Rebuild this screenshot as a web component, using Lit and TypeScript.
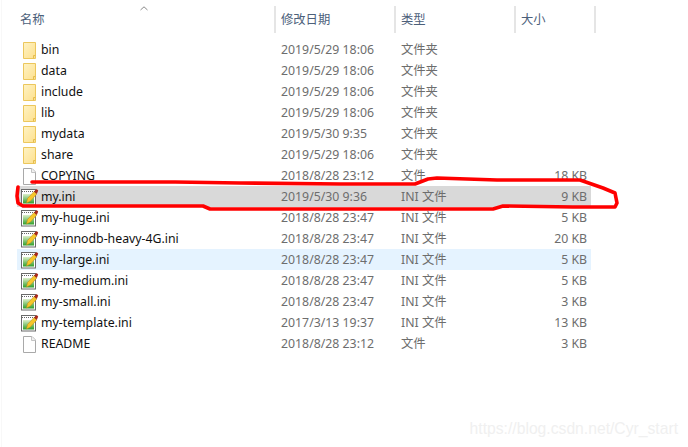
import { LitElement, html, css, svg } from "lit";
import { customElement } from "lit/decorators.js";

type Kind = "folder" | "file" | "ini";
interface Row { name: string; date: string; type: string; size: string; kind: Kind; cls?: string }

const D1 = "2019/5/29 18:06";
const F = "文件夹";
const I = "INI 文件";
const rows: Row[] = [
  { name: "bin", date: D1, type: F, size: "", kind: "folder" },
  { name: "data", date: D1, type: F, size: "", kind: "folder" },
  { name: "include", date: D1, type: F, size: "", kind: "folder" },
  { name: "lib", date: D1, type: F, size: "", kind: "folder" },
  { name: "mydata", date: "2019/5/30 9:35", type: F, size: "", kind: "folder" },
  { name: "share", date: D1, type: F, size: "", kind: "folder" },
  { name: "COPYING", date: "2018/8/28 23:12", type: "文件", size: "18 KB", kind: "file" },
  { name: "my.ini", date: "2019/5/30 9:36", type: I, size: "9 KB", kind: "ini", cls: "sel" },
  { name: "my-huge.ini", date: "2018/8/28 23:47", type: I, size: "5 KB", kind: "ini" },
  { name: "my-innodb-heavy-4G.ini", date: "2018/8/28 23:47", type: I, size: "20 KB", kind: "ini" },
  { name: "my-large.ini", date: "2018/8/28 23:47", type: I, size: "5 KB", kind: "ini", cls: "hover" },
  { name: "my-medium.ini", date: "2018/8/28 23:47", type: I, size: "5 KB", kind: "ini" },
  { name: "my-small.ini", date: "2018/8/28 23:47", type: I, size: "3 KB", kind: "ini" },
  { name: "my-template.ini", date: "2017/3/13 19:37", type: I, size: "13 KB", kind: "ini" },
  { name: "README", date: "2018/8/28 23:12", type: "文件", size: "3 KB", kind: "file" },
];

const icons = {
  folder: html`<svg class="ic" width="16" height="18" viewBox="0 0 16 18">
    <defs><linearGradient id="fg" x1="0" y1="0" x2="1" y2="1">
      <stop offset="0" stop-color="#fff3c4"/><stop offset="1" stop-color="#fde08e"/></linearGradient></defs>
    <path d="M2.5 1.5H14.5V17.5H2.5Z" fill="url(#fg)" stroke="#ecc75c"/>
    <path d="M12.5 17.5V14.5H14.5" fill="#f8dc8a" stroke="#e6bd4e"/>
  </svg>`,
  file: html`<svg class="ic" width="16" height="18" viewBox="0 0 16 18">
    <path d="M2.5 1.5H11L14.5 5V17.5H2.5Z" fill="#fff" stroke="#a9a9a9"/>
    <path d="M10.5 1.5V5.5H14.5" fill="#f1f1f1" stroke="#c4c4c4"/>
  </svg>`,
  ini: html`<svg class="ic" width="18" height="18" viewBox="0 0 18 18">
    <defs><linearGradient id="ig" x1="0" y1="0" x2="0" y2="1">
      <stop offset="0" stop-color="#dcefc8"/><stop offset="1" stop-color="#2f9e2a"/></linearGradient></defs>
    <rect x="0.5" y="1.5" width="14" height="15.5" fill="#fff" stroke="#6a6a6a"/>
    <path d="M1 3.5H14" stroke="#666" stroke-dasharray="1 1"/>
    <rect x="2" y="6" width="11" height="9.5" fill="url(#ig)"/>
    <path d="M5.5 15L6.5 10.5L13 3.5L15.8 6L9.5 13Z" fill="#f6c62a" stroke="#b8861a" stroke-width=".5"/>
    <path d="M13 3.5L15.6 1L17.2 2.6L15.8 6Z" fill="#a8281a"/>
  </svg>`,
};

const redStroke = svg`<path d="M32 182L175 182L240 183L340 184L415 184L428 179L437 178L497 180L580 180L603 188L615 193L617 203L615 207L573 207L503 206L493 209L340 209L210 209L203 206L100 206L23 206L18 203L17 196L18 187" />`;

@customElement("app-root")
export class AppRoot extends LitElement {
  static styles = css`
    :host {
      display: block;
      position: relative;
      width: 688px;
      height: 447px;
      overflow: hidden;
      background: #fff;
      font: 12.3px "Noto Sans", "Noto Sans CJK SC", sans-serif;
    }
    .head {
      display: grid;
      grid-template-columns: 276px 120px 120px 80px;
      padding-top: 6px;
      height: 33px;
      box-sizing: border-box;
      color: #4c607a;
    }
    .hc {
      height: 27px;
      border-right: 2px solid #e5e5e5;
      box-sizing: border-box;
      padding-left: 5px;
      line-height: 27px;
      position: relative;
    }
    .hc:first-child { padding-left: 20px; }
    .sort { position: absolute; left: 140px; top: 0; }
    .list { padding-top: 6px; }
    .row {
      display: grid;
      grid-template-columns: 257px 120px 120px 77px;
      width: 574px;
      margin-left: 17px;
      height: 21px;
      line-height: 21px;
      color: #6d6d6d;
      white-space: nowrap;
    }
    .row.sel { background: #d9d9d9; }
    .row.hover { background: #e5f3ff; }
    .name { display: flex; align-items: center; color: #111; }
    .iw { width: 24px; display: flex; align-items: center; }
    .ic { display: block; margin-left: 4px; flex: none; }
    .date, .type { padding-left: 7px; }
    .size { text-align: right; padding-right: 4px; }
    .ink {
      position: absolute;
      inset: 0;
      fill: none;
      stroke: #f00;
      stroke-width: 3.6;
      stroke-linejoin: round;
      stroke-linecap: round;
      pointer-events: none;
    }
    .mark {
      position: absolute;
      right: 10px;
      bottom: 9px;
      font: 15.7px "Liberation Sans", sans-serif;
      color: #f0f0f0;
    }
    .edge {
      position: absolute;
      left: 1px;
      top: 0;
      bottom: 0;
      width: 1px;
      background: #f8f8f8;
    }
  `;

  render() {
    return html`
      <div class="edge"></div>
      <div class="head">
        <div class="hc">名称
          <svg class="sort" width="8" height="5" viewBox="0 0 8 5"><path d="M.5 4L4 .8L7.5 4" fill="none" stroke="#8a8a8a"/></svg>
        </div>
        <div class="hc">修改日期</div>
        <div class="hc">类型</div>
        <div class="hc">大小</div>
      </div>
      <div class="list">
        ${rows.map(
          (r) => html`<div class="row ${r.cls ?? ""}">
            <div class="name">
              <span class="iw">${icons[r.kind]}</span><span>${r.name}</span>
            </div>
            <div class="date">${r.date}</div>
            <div class="type">${r.type}</div>
            <div class="size">${r.size}</div>
          </div>`
        )}
      </div>
      <svg class="ink" width="688" height="447" viewBox="0 0 688 447">${redStroke}</svg>
      <div class="mark">https://blog.csdn.net/Cyr_start</div>
    `;
  }
}
